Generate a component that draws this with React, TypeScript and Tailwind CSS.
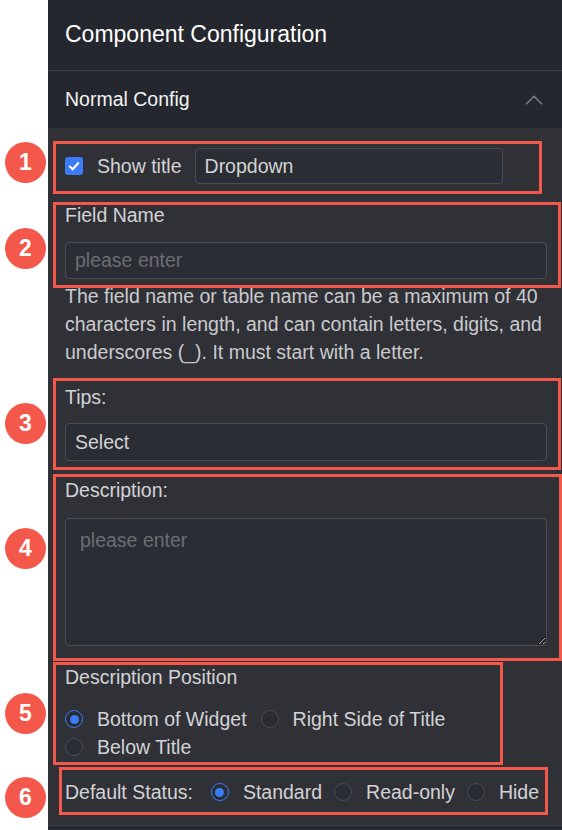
import React from 'react';

const font = "font-['Liberation_Sans',Arial,Helvetica,sans-serif]";

// Radio dot
const Radio: React.FC<{ checked?: boolean }> = ({ checked }) => (
  <span
    className={`flex h-[18px] w-[18px] shrink-0 items-center justify-center rounded-full border ${
      checked ? 'border-[#3b7cf6] bg-[#2a2c33]' : 'border-[#4a4c53] bg-[#2a2c33]'
    }`}
  >
    {checked && <span className="h-[9px] w-[9px] rounded-full bg-[#3b7cf6]" />}
  </span>
);

const RadioItem: React.FC<{ label: string; checked?: boolean; space?: string }> = ({ label, checked, space = 'mr-[14px]' }) => (
  <label className={`flex shrink-0 items-center whitespace-nowrap ${space}`}>
    <Radio checked={checked} />
    <span className="ml-[14px]">{label}</span>
  </label>
);

// Red annotation frame + numbered marker
const Frame: React.FC<{ className: string }> = ({ className }) => (
  <div className={`pointer-events-none absolute border-[3px] border-[#f4584b] ${className}`} />
);

const Marker: React.FC<{ n: number; className: string }> = ({ n, className }) => (
  <div
    className={`pointer-events-none absolute flex h-[41px] w-[41px] items-center justify-center rounded-full bg-[#f4584b] text-[23px] font-bold text-white ${className}`}
  >
    {n}
  </div>
);

const inputCls =
  'h-[37px] rounded-[4px] border border-[#4a4c53] bg-[#2b2d34] px-[9px] text-[19.5px] text-[#d3d3d5] outline-none placeholder:text-[#6b6d73]';

export default function App() {
  return (
    <div className={`relative flex h-[830px] w-[562px] overflow-hidden bg-white ${font}`}>
      <div className="w-[48px] shrink-0" />

      <div className="flex min-h-0 flex-1 flex-col bg-[#25272e]">
        {/* Header */}
        <div className="flex h-[71px] shrink-0 items-center border-b border-[#3a3c43] pb-[2px] pl-[17px] text-[23px] text-white">
          Component Configuration
        </div>

        {/* Section header */}
        <div className="flex h-[57px] shrink-0 items-center justify-between pl-[17px] pr-[19px] text-[19.5px] text-[#f2f2f4]">
          <span>Normal Config</span>
          <svg width="18" height="10" viewBox="0 0 18 10" fill="none">
            <path d="M1 9.2 L9 1.2 L17 9.2" stroke="#7d7f86" strokeWidth="1.5" />
          </svg>
        </div>

        {/* Section body */}
        <div className="shrink-0 bg-[#303137] pb-[19px] pl-[17px] pr-[15px] pt-[20px] text-[19.5px] leading-[28px] text-[#d3d3d5]">
          {/* Show title */}
          <div className="flex h-[36px] items-center">
            <span className="flex h-[18px] w-[18px] shrink-0 items-center justify-center rounded-[3px] bg-[#3b7cf6]">
              <svg width="12" height="10" viewBox="0 0 12 10" fill="none">
                <path d="M1.3 5 L4.6 8.2 L10.8 1.5" stroke="white" strokeWidth="2.2" />
              </svg>
            </span>
            <span className="ml-[14px] whitespace-nowrap">Show title</span>
            <input readOnly value="Dropdown" className={`${inputCls} ml-[13px] !h-[36px] w-[308px] shrink-0`} />
          </div>

          {/* Field Name */}
          <div className="mt-[17px]">Field Name</div>
          <input readOnly placeholder="please enter" className={`${inputCls} mt-[13px] block w-full`} />
          <p className="mt-[3px] text-[#cacacd]">
            The field name or table name can be a maximum of 40 characters in length, and can contain letters,
            digits, and underscores (_). It must start with a letter.
          </p>

          {/* Tips */}
          <div className="mt-[17px]">Tips:</div>
          <div className={`${inputCls} mt-[12px] flex !h-[38px] items-center`}>Select</div>

          {/* Description */}
          <div className="mt-[15px]">Description:</div>
          <textarea
            readOnly
            placeholder="please enter"
            className="mt-[14px] block h-[128px] w-full resize-y rounded-[4px] border border-[#4a4c53] bg-[#2b2d34] px-[14px] py-[7px] text-[19.5px] leading-[28px] text-[#d3d3d5] outline-none [color-scheme:dark] placeholder:text-[#6b6d73]"
          />

          {/* Description Position */}
          <div className="mt-[17px]">Description Position</div>
          <div className="mt-[14px] flex flex-wrap">
            <RadioItem label="Bottom of Widget" checked />
            <RadioItem label="Right Side of Title" />
            <RadioItem label="Below Title" space="" />
          </div>

          {/* Default Status */}
          <div className="mt-[17px] flex items-center whitespace-nowrap">
            <span className="mr-[18px]">Default Status:</span>
            <RadioItem label="Standard" checked space="mr-[12px]" />
            <RadioItem label="Read-only" space="mr-[12px]" />
            <RadioItem label="Hide" space="" />
          </div>
        </div>

        <div className="flex-1 border-t border-[#3c3e45] bg-[#26282f]" />
      </div>

      {/* Annotation layer */}
      <Frame className="left-[53px] top-[141px] h-[53px] w-[489px]" />
      <Frame className="left-[53px] top-[202px] h-[86px] w-[508px]" />
      <Frame className="left-[53px] top-[378px] h-[92px] w-[508px]" />
      <Frame className="left-[53px] top-[474px] h-[187px] w-[509px]" />
      <Frame className="left-[53px] top-[662px] h-[103px] w-[450px]" />
      <Frame className="left-[59px] top-[767px] h-[48px] w-[489px]" />

      <Marker n={1} className="left-[5px] top-[142px]" />
      <Marker n={2} className="left-[5px] top-[228px]" />
      <Marker n={3} className="left-[5px] top-[403px]" />
      <Marker n={4} className="left-[5px] top-[528px]" />
      <Marker n={5} className="left-[5px] top-[693px]" />
      <Marker n={6} className="left-[5px] top-[777px]" />
    </div>
  );
}
